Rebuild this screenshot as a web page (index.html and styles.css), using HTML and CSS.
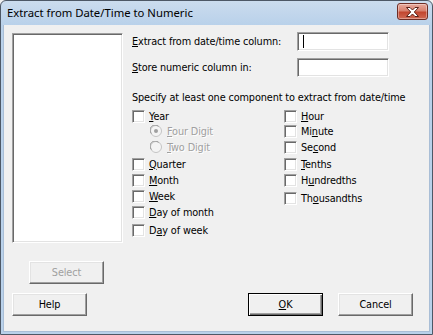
FILE: index.html
```html
<!DOCTYPE html>
<html>
<head>
<meta charset="utf-8">
<link rel="stylesheet" href="styles.css">
</head>
<body>
<div class="window">
  <div class="titlebar">
    <span class="title">Extract from Date/Time to Numeric</span>
    <div class="close">
      <svg width="15" height="10" viewBox="0 0 15 10"><path d="M1.5 0.5h3.5l2.5 2.5 2.5-2.5h3.5l-4.2 4.5 4.2 4.5h-3.5l-2.5-2.5-2.5 2.5h-3.5l4.2-4.5z" fill="#fff" stroke="#5a2219" stroke-width="1" stroke-linejoin="round"/></svg>
    </div>
  </div>
  <div class="client">
    <div class="main">
      <div class="leftcol">
        <div class="listbox"></div>
        <button class="btn disabled select">Select</button>
      </div>
      <div class="fields">
        <div class="fieldrow">
          <span class="label"><u>E</u>xtract from date/time column:</span>
          <div class="input"><span class="caret"></span></div>
        </div>
        <div class="fieldrow second">
          <span class="label"><u>S</u>tore numeric column in:</span>
          <div class="input"></div>
        </div>
        <div class="specify">Specify at least one component to extract from date/time</div>
        <div class="checks">
          <div class="col">
            <div class="item"><span class="cb"></span><span><u>Y</u>ear</span></div>
            <div class="item radio-item up1"><svg class="radio" width="12" height="12" viewBox="0 0 12 12"><circle cx="6" cy="6" r="5.5" fill="#f4f4f4" stroke="#c4c4c4" stroke-width="1"/><path d="M1.5 8.6A5 5 0 0 1 8.6 1.5" fill="none" stroke="#9a9a9a" stroke-width="1"/><circle cx="6" cy="6" r="2" fill="#a0a0a0"/></svg><span class="dis"><u>F</u>our Digit</span></div>
            <div class="item radio-item"><svg class="radio" width="12" height="12" viewBox="0 0 12 12"><circle cx="6" cy="6" r="5.5" fill="#f4f4f4" stroke="#c4c4c4" stroke-width="1"/><path d="M1.5 8.6A5 5 0 0 1 8.6 1.5" fill="none" stroke="#9a9a9a" stroke-width="1"/></svg><span class="dis"><u>T</u>wo Digit</span></div>
            <div class="item down1"><span class="cb"></span><span><u>Q</u>uarter</span></div>
            <div class="item"><span class="cb"></span><span><u>M</u>onth</span></div>
            <div class="item"><span class="cb"></span><span><u>W</u>eek</span></div>
            <div class="item"><span class="cb"></span><span><u>D</u>ay of month</span></div>
            <div class="item down2"><span class="cb"></span><span>D<u>a</u>y of week</span></div>
          </div>
          <div class="col">
            <div class="item"><span class="cb"></span><span><u>H</u>our</span></div>
            <div class="item up1"><span class="cb"></span><span>Mi<u>n</u>ute</span></div>
            <div class="item"><span class="cb"></span><span>Se<u>c</u>ond</span></div>
            <div class="item down1"><span class="cb"></span><span><u>T</u>enths</span></div>
            <div class="item"><span class="cb"></span><span>H<u>u</u>ndredths</span></div>
            <div class="item down2"><span class="cb"></span><span>Th<u>o</u>usandths</span></div>
          </div>
        </div>
      </div>
    </div>
    <div class="footer">
      <button class="btn">Help</button>
      <div class="spacer"></div>
      <button class="btn default"><u>O</u>K</button>
      <button class="btn">Cancel</button>
    </div>
  </div>
</div>
</body>
</html>
```

FILE: styles.css
```css
html, body {
  margin: 0;
  padding: 0;
  background: #f0f0f0;
}
.window {
  width: 433px;
  height: 335px;
  box-sizing: border-box;
  border: 1px solid #4d5866;
  border-radius: 6px 6px 0 0;
  background: linear-gradient(#cbdcee 0px, #b9d1ea 24px);
  display: flex;
  flex-direction: column;
  overflow: hidden;
}
.titlebar {
  height: 24px;
  display: flex;
  align-items: center;
  flex: none;
}
.title {
  font-family: "Noto Sans", sans-serif;
  font-size: 11.3px;
  color: #000;
  margin-left: 6px;
  margin-top: -2px;
}
.close {
  margin-left: auto;
  margin-right: 4px;
  margin-top: -3px;
  width: 29px;
  height: 15px;
  border: 1px solid #6e2d25;
  border-radius: 3px;
  background: linear-gradient(#e8a99c 0%, #d7816f 45%, #c2462f 55%, #d06a54 100%);
  box-shadow: inset 0 0 0 1px rgba(255,255,255,0.35);
  display: flex;
  align-items: center;
  justify-content: center;
}
.client {
  flex: 1;
  margin: 0 2px 2px 2px;
  background: #f0f0f0;
  border: 1px solid #a9bed6;
  border-top: none;
  display: flex;
  flex-direction: column;
  padding: 8px 0 0 0;
  font-family: "DejaVu Sans Condensed", "DejaVu Sans", sans-serif;
  font-stretch: condensed;
  font-size: 10.8px;
  letter-spacing: -0.12px;
  color: #000;
}
.main {
  display: flex;
}
.leftcol {
  margin-left: 8px;
  width: 111px;
  display: flex;
  flex-direction: column;
}
.listbox {
  height: 210px;
  box-sizing: border-box;
  background: #fff;
  border: 1px solid;
  border-color: #a0a0a0 #fff #fff #a0a0a0;
  box-shadow: inset 1px 1px #696969, inset -1px -1px #e3e3e3;
}
.btn {
  width: 75px;
  height: 23px;
  box-sizing: border-box;
  background: #f0f0f0;
  border: 1px solid;
  border-color: #fff #696969 #696969 #fff;
  box-shadow: inset -1px -1px #a0a0a0, inset 1px 1px #e3e3e3;
  font-family: inherit;
  font-stretch: condensed;
  font-size: 10.8px;
  letter-spacing: -0.12px;
  color: #000;
  padding: 0;
  margin: 0;
}
.select {
  margin-top: 18px;
  margin-left: 17px;
}
.disabled {
  color: #a0a0a0;
}
.btn.default {
  border: 1px solid #000;
  box-shadow: inset 1px 1px #fff, inset -1px -1px #696969, inset -2px -2px #a0a0a0;
}
.fields {
  margin-left: 9px;
  margin-top: -1px;
  display: flex;
  flex-direction: column;
  width: 292px;
}
.fieldrow {
  display: flex;
  align-items: center;
  height: 19px;
}
.fieldrow.second {
  margin-top: 7px;
}
.label {
  width: 165px;
  flex: none;
}
.input {
  width: 92px;
  height: 19px;
  box-sizing: border-box;
  background: #fff;
  border: 1px solid;
  border-color: #a0a0a0 #fff #fff #a0a0a0;
  box-shadow: inset 1px 1px #696969, inset -1px -1px #e3e3e3;
  display: flex;
  align-items: center;
  padding-left: 5px;
}
.caret {
  width: 1px;
  height: 13px;
  background: #000;
}
.specify {
  margin-top: 14px;
  height: 13px;
  line-height: 13px;
  white-space: nowrap;
}
.checks {
  display: grid;
  grid-template-columns: 152px auto;
  margin-top: 4px;
}
.col {
  display: flex;
  flex-direction: column;
}
.item {
  height: 16px;
  display: flex;
  align-items: center;
  white-space: nowrap;
}
.item.up1 { margin-top: -1px; }
.item.down1 { margin-top: 1px; }
.item.down2 { margin-top: 2px; }
.cb {
  width: 13px;
  height: 13px;
  box-sizing: border-box;
  background: #fff;
  border: 1px solid;
  border-color: #a0a0a0 #fff #fff #a0a0a0;
  box-shadow: inset 1px 1px #696969, inset -1px -1px #e3e3e3;
  margin-right: 4px;
  flex: none;
}
.radio-item {
  padding-left: 18px;
}
.radio {
  margin-right: 5px;
  flex: none;
}
.dis {
  color: #a0a0a0;
  text-shadow: 1px 1px #fff;
}
.footer {
  display: flex;
  margin-top: 9px;
  padding-left: 8px;
  padding-right: 16px;
}
.spacer {
  flex: 1;
}
.footer .default {
  margin-right: 15px;
}
```
